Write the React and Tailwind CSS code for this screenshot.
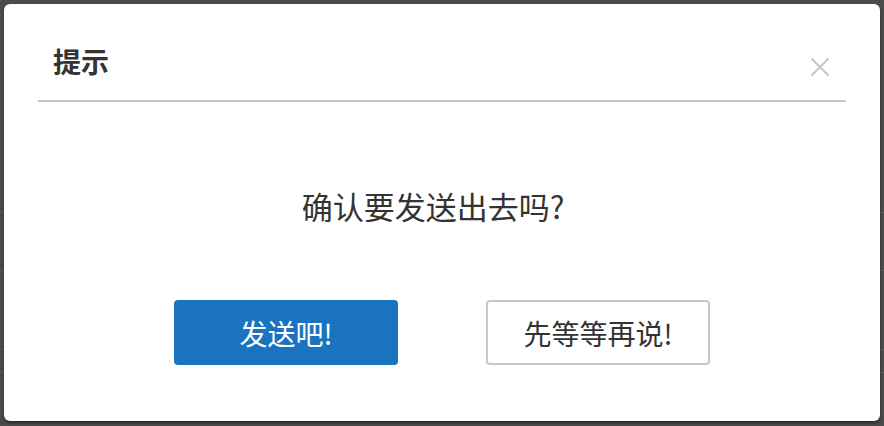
const font = { fontFamily: '"Noto Sans CJK SC", "Noto Sans", sans-serif' };

function Backdrop() {
  // faint table rows behind the overlay
  return (
    <div className="absolute inset-0 flex flex-col" aria-hidden>
      <div className="h-[212px]" />
      <div className="h-px bg-[#5c5c5c]" />
      <div className="h-[57px]" />
      <div className="h-px bg-[#5c5c5c]" />
      <div className="h-[78px]" />
      <div className="h-px bg-[#5c5c5c]" />
      <div className="h-[22px]" />
      <div className="h-px bg-[#5c5c5c]" />
    </div>
  );
}

function CloseIcon() {
  return (
    <svg width="20" height="20" viewBox="0 0 20 20" fill="none" stroke="currentColor" strokeWidth="2.2">
      <path d="M1.5 1.5 L18.5 18.5 M18.5 1.5 L1.5 18.5" />
    </svg>
  );
}

export default function App() {
  return (
    <div className="relative w-[884px] h-[426px] bg-[#4b4b4b] overflow-hidden" style={font}>
      <Backdrop />
      <div className="relative m-[4px] mb-0 h-[417px] rounded-[6px] bg-white shadow-[0_2px_3px_rgba(0,0,0,0.45)] flex flex-col">
        <div className="mx-[34px] h-[98px] border-b-2 border-[#c8c8c8] flex justify-between">
          <h2 className="pt-[37px] pl-[15px] text-[28px] leading-[40px] font-bold text-[#333]">提示</h2>
          <button type="button" className="mt-[53px] mr-[16px] w-5 h-5 text-[#c8c8c8]">
            <CloseIcon />
          </button>
        </div>

        <p className="mt-[82px] pr-[18px] text-center text-[31px] leading-[44px] text-[#333]">确认要发送出去吗?</p>

        <div className="mt-[72px] flex justify-center gap-[88px]">
          <button
            type="button"
            className="w-[224px] h-[65px] rounded-[4px] bg-[#1a73be] text-white text-[28px] leading-none"
          >
            发送吧!
          </button>
          <button
            type="button"
            className="w-[224px] h-[65px] rounded-[4px] border-2 border-[#c8c8c8] bg-white text-[#333] text-[28px] leading-none"
          >
            先等等再说!
          </button>
        </div>
      </div>
    </div>
  );
}
